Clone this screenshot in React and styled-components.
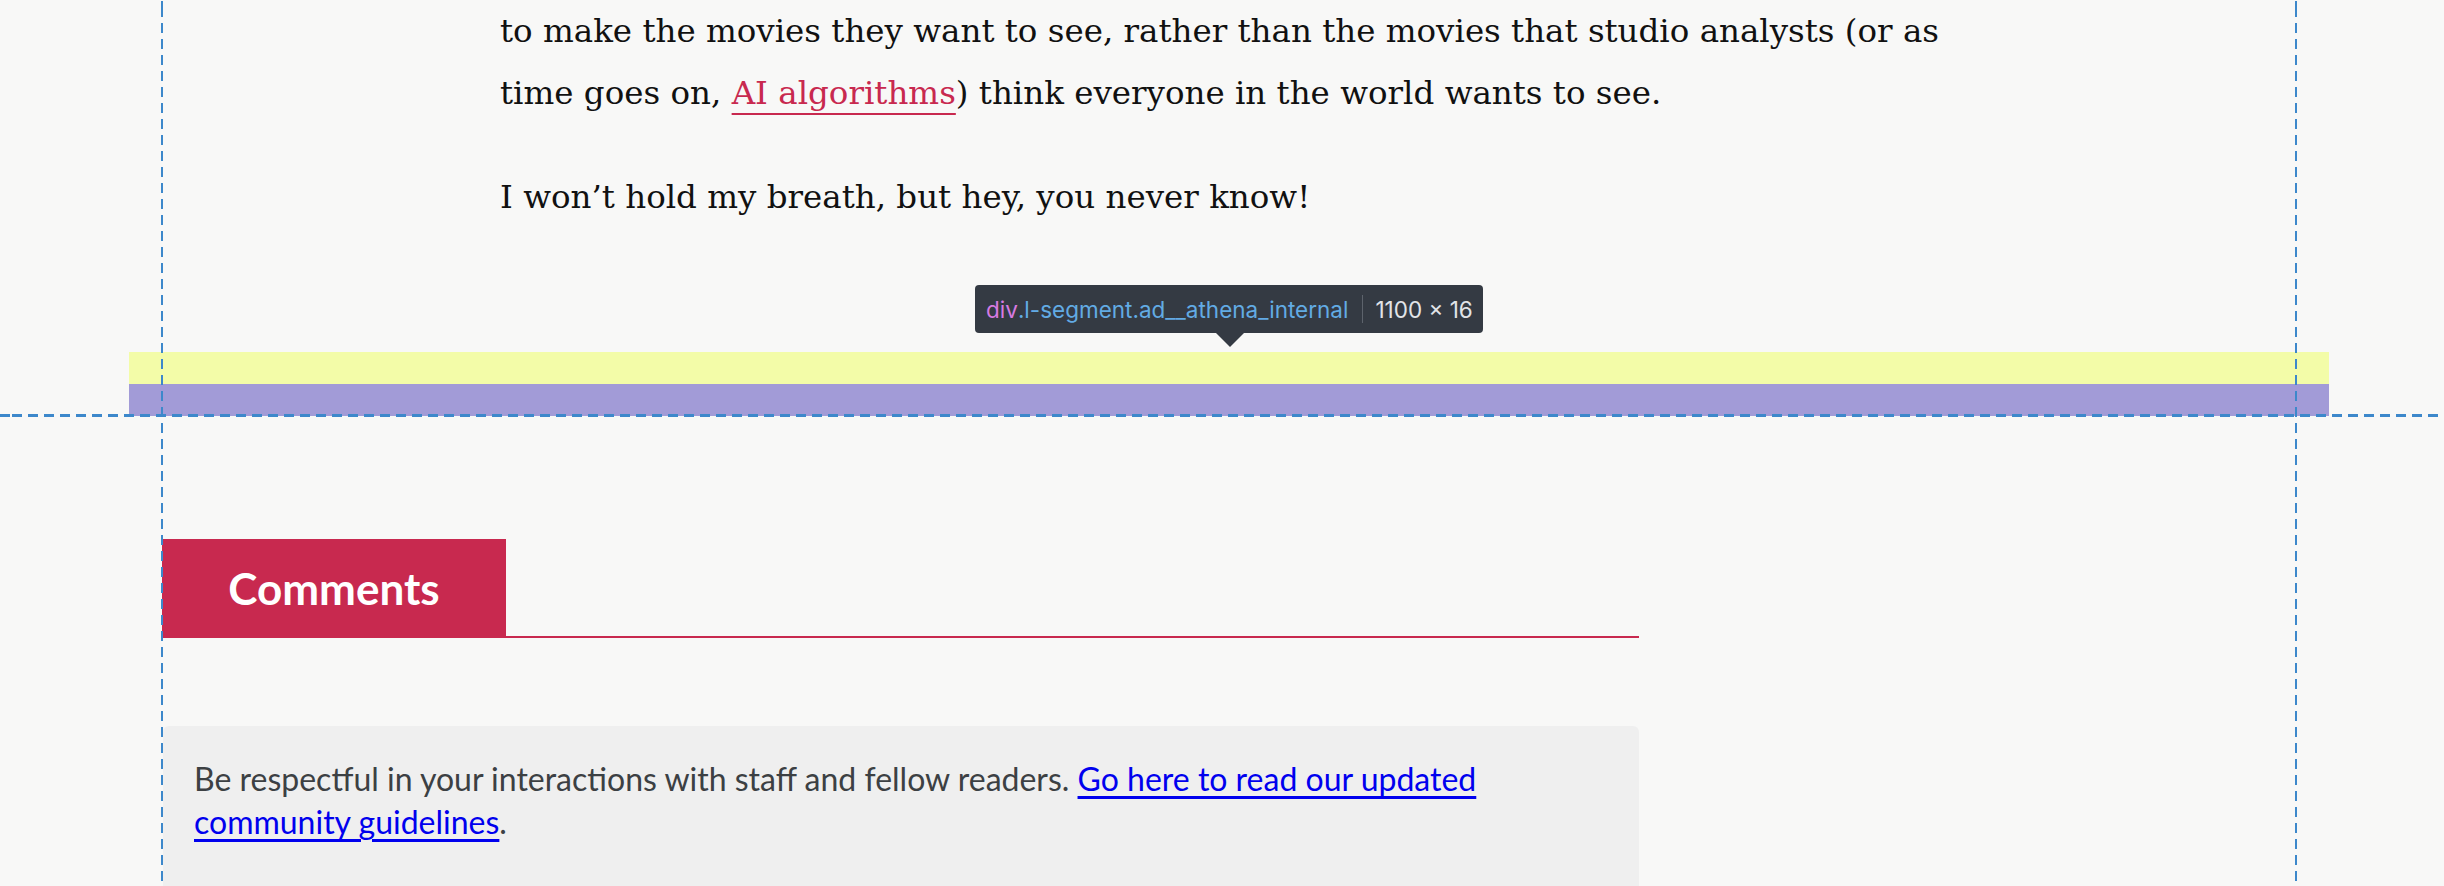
import styled, { createGlobalStyle } from "styled-components"

const GlobalStyle = createGlobalStyle`
  html, body {
    margin: 0;
    padding: 0;
    background: #f8f8f7;
    overflow: hidden;
  }
  #root {
    height: 886px;
  }
`

export default function App() {
  return (
    <>
      <GlobalStyle />
      <Page>
        <Article>
          <Paragraph>
            to make the movies they want to see, rather than the movies that
            studio analysts (or as time goes on,{" "}
            <ArticleLink href="#">AI algorithms</ArticleLink>) think everyone
            in the world wants to see.
          </Paragraph>
          <Paragraph>I won’t hold my breath, but hey, you never know!</Paragraph>
        </Article>

        <AdSegment className="l-segment ad__athena_internal">
          <div className="margin" />
          <div className="content" />
        </AdSegment>

        <Comments>
          <CommentsHeader>
            <CommentsTab>Comments</CommentsTab>
          </CommentsHeader>
          <Guidelines>
            Be respectful in your interactions with staff and fellow readers.{" "}
            <GuidelinesLink href="#">
              Go here to read our updated community guidelines
            </GuidelinesLink>
            .
          </Guidelines>
        </Comments>
      </Page>

      <GuideLine $vertical $at={161} />
      <GuideLine $vertical $at={2295} />
      <GuideLine $at={414} />

      <InfoBar>
        <span className="tag">div</span>
        <span className="classes">.l-segment.ad__athena_internal</span>
        <span className="divider" />
        <span className="size">1100 × 16</span>
      </InfoBar>
    </>
  )
}

const Page = styled.main`
  padding: 0 148px 0 162px;
  height: 886px;
  box-sizing: border-box;
  overflow: hidden;
`

const Article = styled.article`
  margin-left: 338px;
  width: 1480px;
  font-family: "DejaVu Serif", Georgia, serif;
  font-size: 32.5px;
  line-height: 62px;
  color: #111;
`

const Paragraph = styled.p`
  margin: 0 0 42px;
`

const ArticleLink = styled.a`
  color: #c8294f;
  text-decoration: underline;
  text-decoration-thickness: 2px;
  text-underline-offset: 9px;
`

const AdSegment = styled.div`
  margin: 124px -32px 0 -33px;
  width: 2200px;

  .margin {
    height: 32px;
    background: #f3fca8;
  }
  .content {
    height: 32px;
    background: #a29bd7;
  }
`

const Comments = styled.section`
  margin-top: 123px;
  width: 1477px;
`

const CommentsHeader = styled.div`
  display: flex;
  border-bottom: 2px solid #c8294f;
`

const CommentsTab = styled.h2`
  margin: 0;
  width: 344px;
  height: 97px;
  display: flex;
  align-items: center;
  justify-content: center;
  background: #c8294f;
  color: #fff;
  font-family: Lato, "Open Sans", sans-serif;
  font-weight: 700;
  font-size: 44px;
`

const Guidelines = styled.div`
  margin: 88px 0 0 1px;
  padding: 31px 30px 80px 31px;
  border-radius: 6px 6px 0 0;
  background: #efefef;
  color: #3c4043;
  font-family: Lato, "Open Sans", sans-serif;
  font-size: 32px;
  line-height: 43px;
`

const GuidelinesLink = styled.a`
  color: #0000ee;
  text-decoration: underline;
  text-decoration-thickness: 3px;
  text-underline-offset: 5px;
`

const GuideLine = styled.div`
  position: absolute;
  pointer-events: none;
  ${({ $vertical, $at }) =>
    $vertical
      ? `
    top: 0;
    bottom: 0;
    left: ${$at}px;
    width: 2px;
    background: repeating-linear-gradient(to bottom, #3d88cb 0 10px, transparent 10px 16px);
    background-position: 0 7px;
  `
      : `
    left: 0;
    right: 0;
    top: ${$at}px;
    height: 3px;
    background: repeating-linear-gradient(to right, #3d88cb 0 10px, transparent 10px 16px);
    background-position: 12px 0;
  `}
`

const InfoBar = styled.div`
  position: absolute;
  left: 975px;
  top: 285px;
  height: 48px;
  padding: 0 10px 0 11px;
  display: flex;
  align-items: center;
  background: #343a43;
  border-radius: 4px;
  font-family: Inter, "Noto Sans", sans-serif;
  font-size: 22.5px;
  white-space: nowrap;

  &::after {
    content: "";
    position: absolute;
    left: 241px;
    top: 48px;
    border-left: 14px solid transparent;
    border-right: 14px solid transparent;
    border-top: 14px solid #343a43;
  }

  .tag {
    color: #d77ae1;
  }
  .classes {
    color: #62abe4;
  }
  .divider {
    width: 1px;
    height: 28px;
    margin: 0 12px 0 14px;
    background: #5d636c;
  }
  .size {
    color: #e1e4e8;
  }
`
